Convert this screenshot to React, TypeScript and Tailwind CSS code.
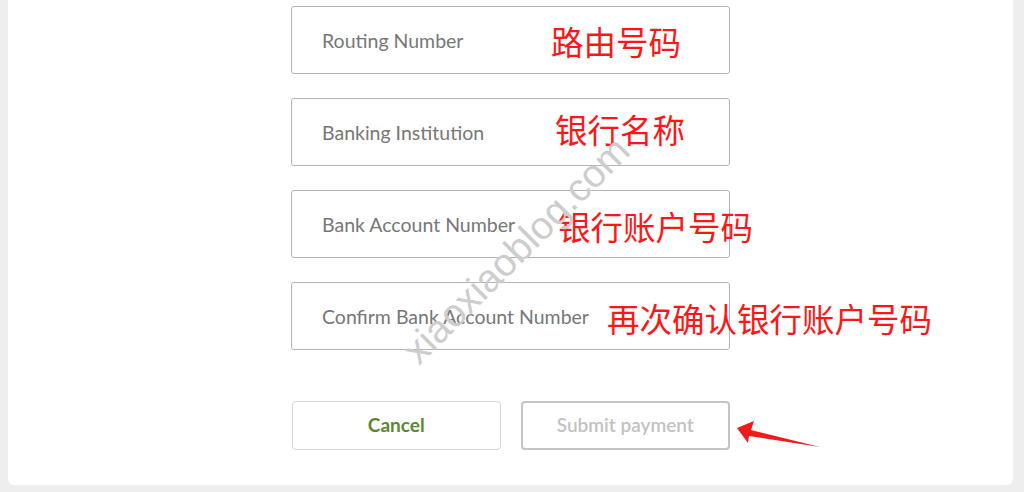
import React from "react";

const fields = [
  "Routing Number",
  "Banking Institution",
  "Bank Account Number",
  "Confirm Bank Account Number",
];

const notes = [
  { text: "路由号码", left: 551, top: 22 },
  { text: "银行名称", left: 555, top: 110 },
  { text: "银行账户号码", left: 558, top: 207 },
  { text: "再次确认银行账户号码", left: 607, top: 299 },
];

export default function App() {
  return (
    <div
      className="min-h-[492px] w-[1024px] bg-[#eeeeee] pl-[8px] pr-[11px] pb-[8px]"
      style={{ fontFamily: "Lato, 'Open Sans', sans-serif" }}
    >
      <div className="relative flex flex-col items-center overflow-hidden rounded-b-[6px] bg-white pt-[6px] pb-[35px]">
        <div className="flex w-[439px] flex-col gap-[24px]">
          {fields.map((f) => (
            <input
              key={f}
              placeholder={f}
              className="h-[68px] w-full rounded-[3px] border border-[#b4b4b4] bg-white pl-[30px] text-[19.5px] text-[#555] outline-none placeholder:text-[#777]"
            />
          ))}
        </div>
        <div className="mt-[51px] flex w-[439px] gap-[20px] pl-[1px]">
          <button className="h-[49px] w-[209px] rounded-[4px] border border-[#d6d6d6] bg-white text-[19px] font-bold text-[#5a8a2c]">
            Cancel
          </button>
          <button className="h-[49px] w-[210px] rounded-[4px] border-[2px] border-[#c4c4c4] bg-white text-[19px] font-semibold text-[#c2c2c2]">
            Submit payment
          </button>
        </div>

        {notes.map((n) => (
          <div
            key={n.text}
            className="absolute whitespace-nowrap text-[32.5px] leading-[38px] text-[#ff1616]"
            style={{
              left: n.left - 8,
              top: n.top,
              fontFamily: "'Noto Sans CJK SC', sans-serif",
            }}
          >
            {n.text}
          </div>
        ))}

        <div
          className="pointer-events-none absolute left-[508px] top-[250px] whitespace-nowrap text-[39px] leading-none text-[#cdcdcd]"
          style={{
            fontFamily: "'Liberation Sans', Arial, sans-serif",
            transform: "translate(-50%, -50%) rotate(-45deg)",
          }}
        >
          xiaoxiaoblog.com
        </div>

        <svg
          className="absolute left-[721px] top-[416px]"
          width="100"
          height="36"
          viewBox="729 416 100 36"
        >
          <polygon
            points="737,428 754,421 751,430 820,447 749,436 748,443"
            fill="#f21a1a"
          />
        </svg>
      </div>
    </div>
  );
}
